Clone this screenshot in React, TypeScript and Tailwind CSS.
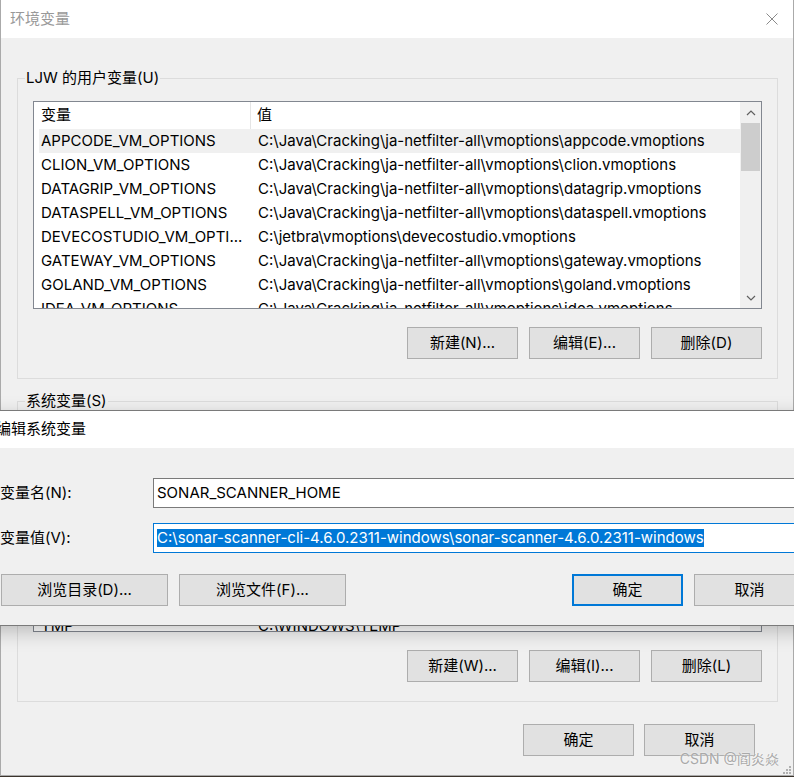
import React from "react";

const userVars: [string, string][] = [
  ["APPCODE_VM_OPTIONS", "C:\\Java\\Cracking\\ja-netfilter-all\\vmoptions\\appcode.vmoptions"],
  ["CLION_VM_OPTIONS", "C:\\Java\\Cracking\\ja-netfilter-all\\vmoptions\\clion.vmoptions"],
  ["DATAGRIP_VM_OPTIONS", "C:\\Java\\Cracking\\ja-netfilter-all\\vmoptions\\datagrip.vmoptions"],
  ["DATASPELL_VM_OPTIONS", "C:\\Java\\Cracking\\ja-netfilter-all\\vmoptions\\dataspell.vmoptions"],
  ["DEVECOSTUDIO_VM_OPTI...", "C:\\jetbra\\vmoptions\\devecostudio.vmoptions"],
  ["GATEWAY_VM_OPTIONS", "C:\\Java\\Cracking\\ja-netfilter-all\\vmoptions\\gateway.vmoptions"],
  ["GOLAND_VM_OPTIONS", "C:\\Java\\Cracking\\ja-netfilter-all\\vmoptions\\goland.vmoptions"],
  ["IDEA_VM_OPTIONS", "C:\\Java\\Cracking\\ja-netfilter-all\\vmoptions\\idea.vmoptions"],
];

const sysVars: [string, string][] = [
  ["PROCESSOR_REVISION", "a503"],
  ["PSModulePath", "%ProgramFiles%\\WindowsPowerShell\\Modules"],
  ["SONAR_SCANNER_HOME", "C:\\sonar-scanner-cli-4.6.0.2311-windows"],
  ["TEMP", "C:\\WINDOWS\\TEMP"],
  ["TMP", "C:\\WINDOWS\\TEMP"],
];

function Chevron({ up }: { up?: boolean }) {
  return (
    <svg width="10" height="6" viewBox="0 0 10 6" className="block">
      <polyline
        points={up ? "1,5 5,1 9,5" : "1,1 5,5 9,1"}
        fill="none"
        stroke="#606060"
        strokeWidth="1.2"
      />
    </svg>
  );
}

function Btn({ children, w = "w-[111px]", primary }: { children: React.ReactNode; w?: string; primary?: boolean }) {
  return (
    <div
      className={`${w} h-[32px] flex items-center justify-center bg-[#e1e1e1] text-[15px] text-black ${
        primary ? "border-2 border-[#0078d7]" : "border border-[#adadad]"
      }`}
    >
      {children}
    </div>
  );
}

function VarList({ rows, scrolledToEnd }: { rows: [string, string][]; scrolledToEnd?: boolean }) {
  return (
    <div className="h-[208px] border border-[#828790] bg-white flex overflow-hidden">
      <div className="flex-1 flex flex-col overflow-hidden">
        <div className="h-[27px] shrink-0 flex items-center">
          <div className="w-[217px] h-full pl-[7px] flex items-center border-r border-[#e5e5e5]">变量</div>
          <div className="pl-[6px]">值</div>
        </div>
        <div className={`flex-1 flex flex-col pl-[5px] overflow-hidden ${scrolledToEnd ? "justify-end" : ""}`}>
          {rows.map(([k, v], i) => (
            <div
              key={k}
              className={`h-[24px] shrink-0 flex items-center whitespace-nowrap ${
                !scrolledToEnd && i === 0 ? "bg-[#f0f0f0]" : ""
              } ${scrolledToEnd && i === rows.length - 1 ? "-mb-[7px]" : ""}`}
            >
              <div className="w-[212px] pl-[2px] overflow-hidden">{k}</div>
              <div className="pl-[7px]">{v}</div>
            </div>
          ))}
        </div>
      </div>
      <div className="w-[21px] bg-[#f0f0f0] flex flex-col">
        <div className="h-[21px] flex items-center justify-center">
          <Chevron up />
        </div>
        <div className="px-[1px]">
          <div className={`h-[48px] bg-[#cdcdcd] ${scrolledToEnd ? "hidden" : ""}`} />
        </div>
        <div className="flex-1" />
        <div className="h-[21px] flex items-center justify-center">
          <Chevron />
        </div>
      </div>
    </div>
  );
}

function Group({ title, rows, buttons, scrolledToEnd, className }: {
  title: string;
  rows: [string, string][];
  buttons: string[];
  scrolledToEnd?: boolean;
  className?: string;
}) {
  return (
    <fieldset className={`border border-[#dcdcdc] p-0 ${className ?? ""}`}>
      <legend className="ml-[7px] px-[1px] leading-[20px] text-[15px]">{title}</legend>
      <div className="mx-[15px] mt-[13px]">
        <VarList rows={rows} scrolledToEnd={scrolledToEnd} />
        <div className="mt-[18px] mb-[19px] flex justify-end gap-[11px]">
          {buttons.map((b) => (
            <Btn key={b}>{b}</Btn>
          ))}
        </div>
      </div>
    </fieldset>
  );
}

export default function App() {
  return (
    <div className="relative w-[794px] h-[777px] overflow-hidden bg-[#3b342c] font-['Inter','Noto_Sans_CJK_SC',sans-serif] text-[15px] text-black">
      {/* 环境变量 main window */}
      <div className="h-[776px] bg-[#f0f0f0] border-x border-b border-[#aaaaaa] flex flex-col">
        <div className="h-[38px] shrink-0 bg-white flex items-center justify-between pl-[9px] pr-[15px]">
          <span className="text-[#999999]">环境变量</span>
          <svg width="12" height="12" viewBox="0 0 12 12">
            <path d="M0.5 0.5 L11.5 11.5 M11.5 0.5 L0.5 11.5" stroke="#8a8a8a" strokeWidth="1" />
          </svg>
        </div>
        <div className="pl-[16px] pr-[15px]">
          <Group
            className="mt-[30px]"
            title="LJW 的用户变量(U)"
            rows={userVars}
            buttons={["新建(N)...", "编辑(E)...", "删除(D)"]}
          />
          <Group
            className="mt-[12px]"
            title="系统变量(S)"
            rows={sysVars}
            scrolledToEnd
            buttons={["新建(W)...", "编辑(I)...", "删除(L)"]}
          />
        </div>
        <div className="mt-[22px] pr-[38px] flex justify-end gap-[10px]">
          <Btn>确定</Btn>
          <Btn>取消</Btn>
        </div>
      </div>

      {/* 编辑系统变量 dialog */}
      <div className="absolute top-[410px] left-[-40px] w-[900px] border border-[#7a7a7a] bg-[#f0f0f0] shadow-[0_6px_18px_rgba(0,0,0,0.22)]">
        <div className="h-[37px] bg-white flex items-center pl-[35px]">编辑系统变量</div>
        <div className="pl-[39px] pr-[54px] pt-[30px] pb-[19px] flex flex-col">
          <div className="flex items-center h-[30px]">
            <div className="w-[153px]">变量名(N):</div>
            <div className="flex-1 h-full border border-[#7a7a7a] bg-white pl-[3px] flex items-center">
              SONAR_SCANNER_HOME
            </div>
          </div>
          <div className="flex items-center h-[30px] mt-[15px]">
            <div className="w-[153px]">变量值(V):</div>
            <div className="flex-1 h-full border border-[#0078d7] bg-white pl-[3px] flex items-center">
              <span className="bg-[#0078d7] text-white leading-[18px]">
                C:\sonar-scanner-cli-4.6.0.2311-windows\sonar-scanner-4.6.0.2311-windows
              </span>
            </div>
          </div>
          <div className="mt-[21px] flex gap-[11px] pl-[1px]">
            <Btn w="w-[167px]">浏览目录(D)...</Btn>
            <Btn w="w-[167px]">浏览文件(F)...</Btn>
            <div className="flex-1" />
            <Btn primary>确定</Btn>
            <Btn>取消</Btn>
          </div>
        </div>
      </div>

      {/* watermark + size grip */}
      <div className="absolute right-[15px] bottom-[8px] text-[14px] text-[#a9a9a9] [text-shadow:0_0_2px_#ffffff]">
        CSDN @阎炎焱
      </div>
      <svg className="absolute right-[2px] bottom-[2px]" width="10" height="10" viewBox="0 0 10 10">
        <rect x="7" y="1" width="2" height="2" fill="#b0b0b0" />
        <rect x="4" y="4" width="2" height="2" fill="#b0b0b0" />
        <rect x="7" y="4" width="2" height="2" fill="#b0b0b0" />
        <rect x="1" y="7" width="2" height="2" fill="#b0b0b0" />
        <rect x="4" y="7" width="2" height="2" fill="#b0b0b0" />
        <rect x="7" y="7" width="2" height="2" fill="#b0b0b0" />
      </svg>
    </div>
  );
}
